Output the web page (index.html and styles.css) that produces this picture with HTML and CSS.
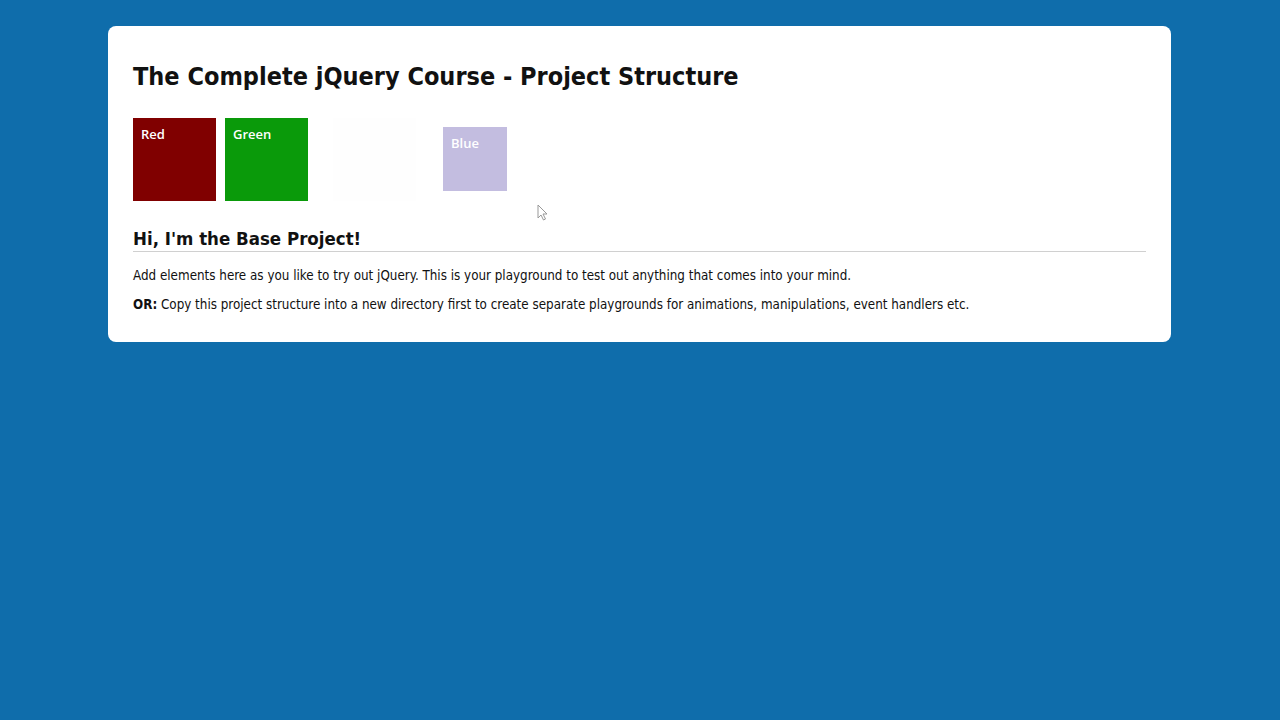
FILE: index.html
```html
<!DOCTYPE html>
<html>
<head>
<meta charset="utf-8">
<link rel="stylesheet" href="styles.css">
</head>
<body>
<div class="card">
  <h1 class="title">The Complete jQuery Course - Project Structure</h1>
  <div class="boxes">
    <div class="box red">Red</div>
    <div class="box green">Green</div>
    <div class="box ghost"></div>
    <div class="box blue">Blue</div>
  </div>
  <h2 class="sub">Hi, I'm the Base Project!</h2>
  <p class="text">Add elements here as you like to try out jQuery. This is your playground to test out anything that comes into your mind.</p>
  <p class="text"><b>OR:</b> Copy this project structure into a new directory first to create separate playgrounds for animations, manipulations, event handlers etc.</p>
</div>
<svg class="cursor" width="12" height="18" viewBox="0 0 12 18"><path d="M1 1 L1 14 L4 11 L6.5 16 L8.5 15 L6 10 L10 10 Z" fill="#fff" stroke="#999" stroke-width="1"/></svg>
</body>
</html>
```
FILE: styles.css
```css
html, body { margin: 0; padding: 0; }
body {
  background: #0f6dab;
  width: 1280px;
  height: 720px;
  font-family: "DejaVu Sans Condensed", "DejaVu Sans", sans-serif;
  color: #111;
  position: relative;
}
.card {
  position: relative;
  margin: 26px 0 0 108px;
  width: 1063px;
  box-sizing: border-box;
  background: #fff;
  border-radius: 8px;
  padding: 36px 25px 29px 25px;
}
.title {
  margin: 0;
  font-size: 25px;
  font-weight: bold;
  line-height: 30px;
}
.boxes {
  display: flex;
  align-items: flex-start;
  margin-top: 26px;
  height: 83px;
}
.box {
  width: 83px;
  height: 83px;
  box-sizing: border-box;
  color: #fff;
  font-family: "Open Sans", sans-serif;
  font-size: 13px;
  font-weight: 600;
  padding: 8px 8px;
  line-height: 16px;
}
.red { background: #800000; }
.green { background: #0a9a0a; margin-left: 9px; }
.ghost { background: #fefefe; margin-left: 25px; }
.blue { background: #c3bde0; width: 64px; height: 64px; margin-left: 27px; margin-top: 9px; }
.sub {
  margin: 27px 0 0 0;
  font-size: 18.5px;
  font-weight: bold;
  line-height: 22px;
  padding-bottom: 1px;
  border-bottom: 1px solid #d0d0d0;
}
.text {
  margin: 16px 0 0 0;
  font-size: 13.3px;
  line-height: 16px;
}
.text + .text { margin-top: 13px; }
.cursor { position: absolute; left: 537px; top: 204px; }
```
